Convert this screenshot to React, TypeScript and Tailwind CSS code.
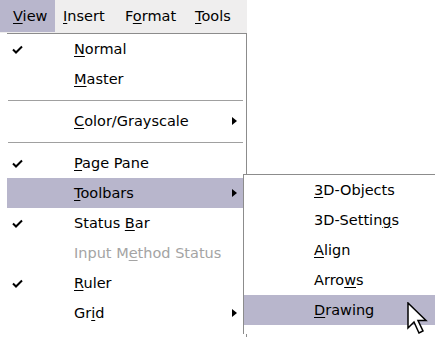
import React from 'react';

type Item =
  | { kind: 'sep' }
  | {
      kind: 'item';
      pre: string;
      key: string;
      post: string;
      checked?: boolean;
      sub?: boolean;
      active?: boolean;
      disabled?: boolean;
    };

const mainItems: Item[] = [
  { kind: 'item', pre: '', key: 'N', post: 'ormal', checked: true },
  { kind: 'item', pre: '', key: 'M', post: 'aster' },
  { kind: 'sep' },
  { kind: 'item', pre: '', key: 'C', post: 'olor/Grayscale', sub: true },
  { kind: 'sep' },
  { kind: 'item', pre: '', key: 'P', post: 'age Pane', checked: true },
  { kind: 'item', pre: '', key: 'T', post: 'oolbars', sub: true, active: true },
  { kind: 'item', pre: 'Status ', key: 'B', post: 'ar', checked: true },
  { kind: 'item', pre: 'Input M', key: 'e', post: 'thod Status', disabled: true },
  { kind: 'item', pre: '', key: 'R', post: 'uler', checked: true },
  { kind: 'item', pre: 'Gr', key: 'i', post: 'd', sub: true },
];

const subItems = [
  { pre: '', key: '3', post: 'D-Objects' },
  { pre: '3D-Settin', key: 'g', post: 's' },
  { pre: '', key: 'A', post: 'lign' },
  { pre: 'Arro', key: 'w', post: 's' },
  { pre: '', key: 'D', post: 'rawing', active: true },
];

const Check = () => (
  <svg width="11" height="9" viewBox="0 0 11 9">
    <path d="M1 4.5 L4 7.5 L10 1.5" fill="none" stroke="#000" strokeWidth="2" />
  </svg>
);

const Arrow = () => (
  <svg width="5" height="8" viewBox="0 0 5 8">
    <path d="M0 0 L5 4 L0 8 Z" fill="#000" />
  </svg>
);

const Label = ({ pre, k, post }: { pre: string; k: string; post: string }) => (
  <span>
    {pre}
    <span className="underline underline-offset-2">{k}</span>
    {post}
  </span>
);

export default function App() {
  return (
    <div
      className="relative w-[435px] h-[337px] overflow-hidden bg-white text-[14.5px] text-black"
      style={{ fontFamily: '"DejaVu Sans", Verdana, sans-serif' }}
    >
      {/* menu bar */}
      <div className="flex h-[33px] w-[247px] items-start bg-[#efeeee]">
        <div className="flex h-[32px] w-[55px] items-center bg-[#b8b6cc] pl-[13px] pt-[2px]">
          <Label pre="" k="V" post="iew" />
        </div>
        <div className="flex h-[32px] w-[62px] items-center pl-[8px] pt-[2px]">
          <Label pre="" k="I" post="nsert" />
        </div>
        <div className="flex h-[32px] w-[70px] items-center pl-[8px] pt-[2px]">
          <Label pre="F" k="o" post="rmat" />
        </div>
        <div className="flex h-[32px] w-[55px] items-center pl-[8px] pt-[2px]">
          <Label pre="" k="T" post="ools" />
        </div>
      </div>

      {/* view menu */}
      <div className="ml-[7px] h-[304px] w-[240px] border-t border-r border-[#8c8c8c] bg-white">
        {mainItems.map((it, i) =>
          it.kind === 'sep' ? (
            <div key={i} className="flex h-[12px] items-center pl-[1px] pr-[3px]">
              <div className="h-px w-full bg-[#a0a0a0]" />
            </div>
          ) : (
            <div
              key={i}
              className={`flex h-[30px] items-center ${it.active ? 'bg-[#b8b6cc]' : ''} ${
                it.disabled ? 'text-[#a4a4a4]' : ''
              }`}
            >
              <div className="flex w-[67px] justify-start pl-[5px]">{it.checked && <Check />}</div>
              <div className="flex-1 pt-[2px]">
                <Label pre={it.pre} k={it.key} post={it.post} />
              </div>
              <div className="flex w-[14px] justify-start">{it.sub && <Arrow />}</div>
            </div>
          ),
        )}
      </div>

      {/* toolbars submenu */}
      <div className="absolute left-[243px] top-[174px] h-[160px] w-[200px] border-t border-l border-[#8c8c8c] bg-white">
        {subItems.map((it, i) => (
          <div
            key={i}
            className={`flex h-[30px] items-center pl-[70px] pt-[2px] ${it.active ? 'bg-[#b8b6cc]' : ''}`}
          >
            <Label pre={it.pre} k={it.key} post={it.post} />
          </div>
        ))}
      </div>

      {/* mouse pointer */}
      <svg
        className="absolute left-[407px] top-[302px]"
        width="22"
        height="35"
        viewBox="0 0 22 35"
      >
        <path
          d="M1 1 L1 26 L7 20 L12 31 L16 29 L11 18.5 L19 18.5 Z"
          fill="#fff"
          stroke="#000"
          strokeWidth="1.5"
          strokeLinejoin="miter"
        />
      </svg>
    </div>
  );
}
